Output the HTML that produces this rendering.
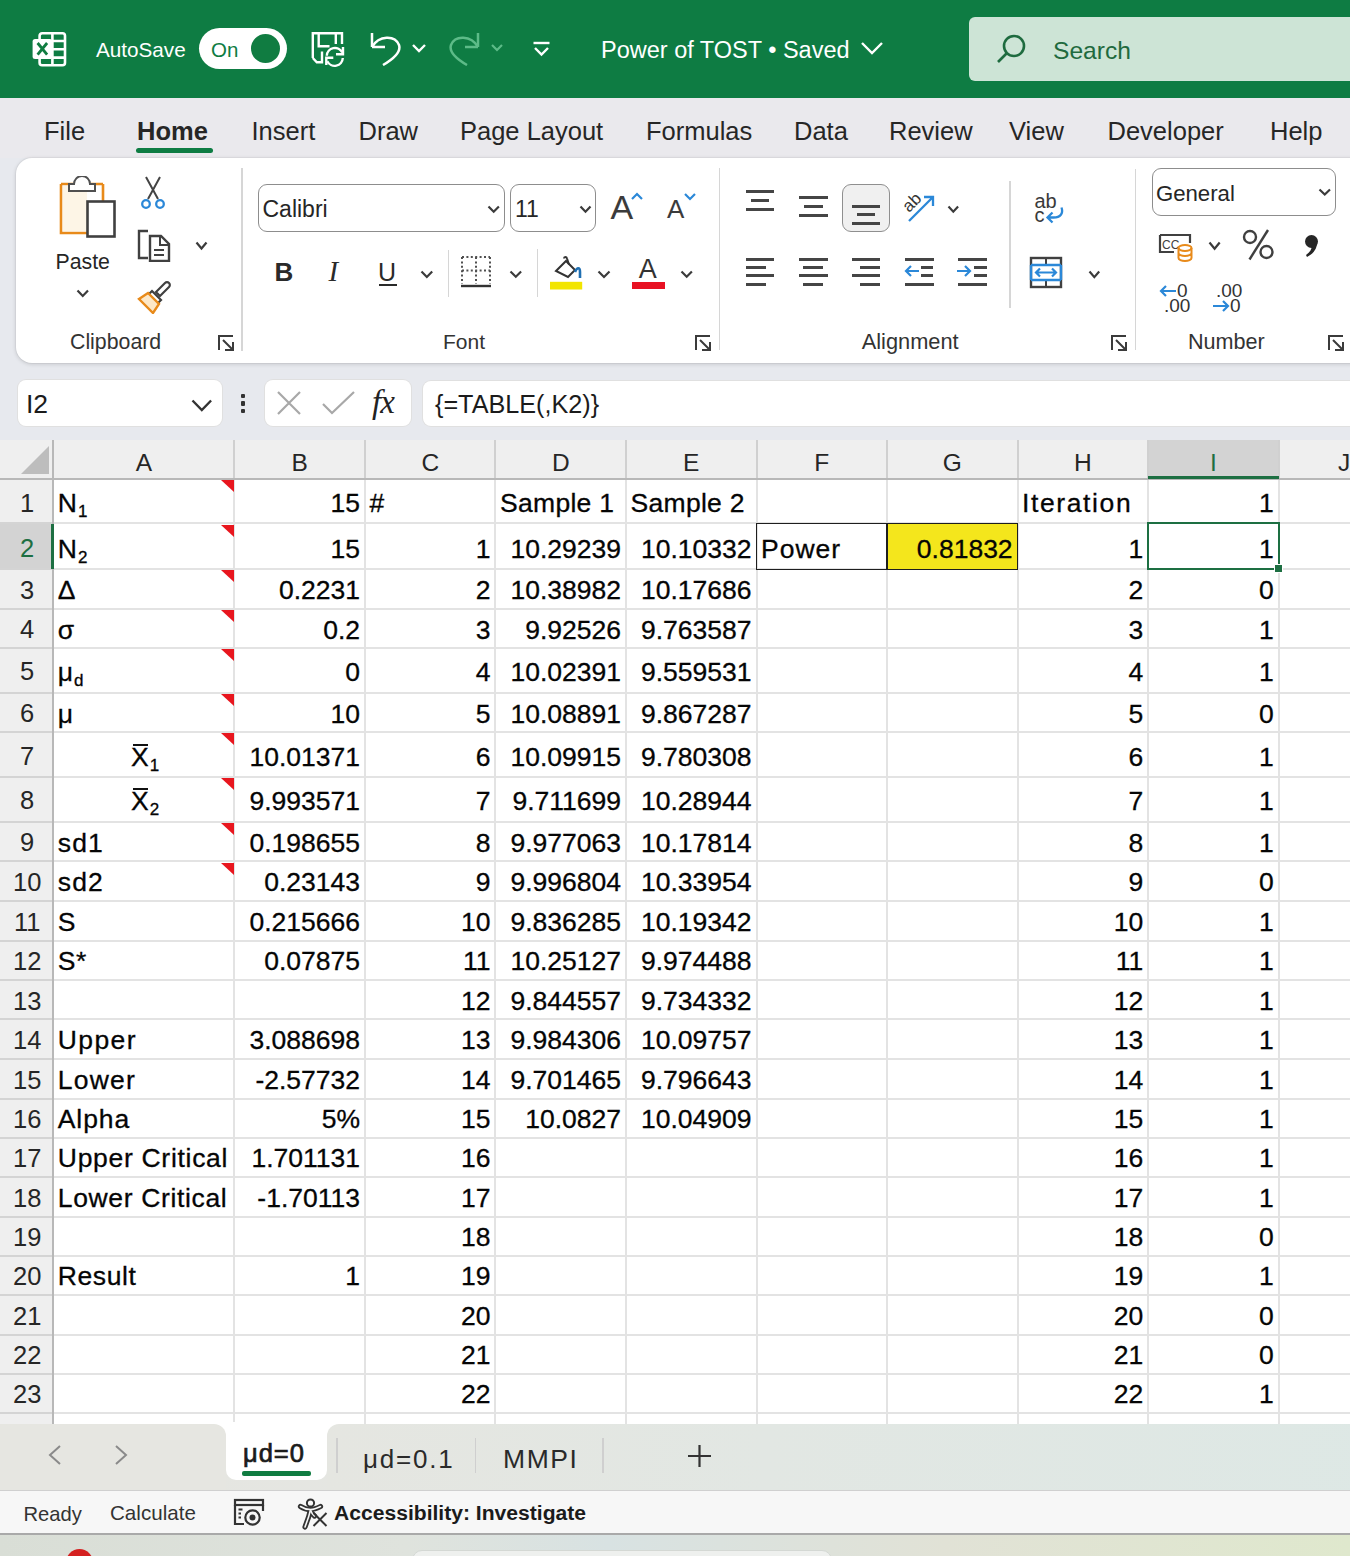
<!DOCTYPE html>
<html><head><meta charset="utf-8"><style>
html,body{margin:0;padding:0;}
body{width:1350px;height:1556px;position:relative;overflow:hidden;background:#e7e9ee;font-family:"Liberation Sans",sans-serif;}
</style></head><body>
<div style="position:absolute;left:0px;top:0px;width:1350px;height:98px;background:#0e7c43;"></div><svg style="position:absolute;left:31px;top:31px;" width="36" height="36" viewBox="0 0 36 36" fill="none">
<rect x="8.6" y="2.3" width="25.4" height="32" rx="2.5" stroke="#fff" stroke-width="2.6"/>
<path d="M21.4 2v33 M21.4 10h12.6 M21.4 18.3h12.6 M21.4 26.6h12.6 M10 10h10 M10 26.6h10" stroke="#fff" stroke-width="2.6"/>
<rect x="1.6" y="7.9" width="19.5" height="20.2" rx="2.5" fill="#fff"/>
<path d="M6.6 12l9.5 11.6 M16.1 12l-9.5 11.6" stroke="#107c41" stroke-width="2.8"/>
</svg><div style="left:96px;position:absolute;top:39.88px;font-size:20.7px;line-height:20.7px;color:#fff;font-weight:400;font-family:&quot;Liberation Sans&quot;,sans-serif;white-space:nowrap;">AutoSave</div><div style="position:absolute;left:198.5px;top:28.2px;width:88.5px;height:41px;background:#fff;border-radius:21px;"></div><div style="left:211px;position:absolute;top:39.65px;font-size:20.5px;line-height:20.5px;color:#0e7c43;font-weight:400;font-family:&quot;Liberation Sans&quot;,sans-serif;white-space:nowrap;">On</div><div style="position:absolute;left:251px;top:34px;width:29px;height:29px;border-radius:50%;background:#107c41;"></div><svg style="position:absolute;left:311px;top:31px;" width="36" height="36" viewBox="0 0 36 36" fill="none">
<path d="M1.8 27V2.2H31V13 M1.8 27l4 4.3H11V20.5" stroke="#fff" stroke-width="2.4"/>
<path d="M7.7 2.2V15.3H18.5 M24.8 2.2V13" stroke="#fff" stroke-width="2.4"/>
<path d="M15.8 24.8a8.2 8.2 0 0 1 15.5-3.3 M31.8 27a8.2 8.2 0 0 1-15.5 3.3" stroke="#fff" stroke-width="2.4"/>
<path d="M32 16v7.2h-7 M15.3 34v-7.2h7" stroke="#fff" stroke-width="2.4"/>
</svg><svg style="position:absolute;left:369px;top:31px;" width="34" height="35" viewBox="0 0 34 35" fill="none">
<path d="M3 16 L 3 2 M3 16 L 16 16" stroke="#fff" stroke-width="2.5"/>
<path d="M3 16 C 10 4, 26 4, 30 14 C 32 20, 26 27, 14 34" stroke="#fff" stroke-width="2.5"/>
</svg><svg style="position:absolute;left:411px;top:43px;" width="16" height="11" viewBox="0 0 16 11" fill="none"><path d="M2 2l6 6 6-6" stroke="#fff" stroke-width="2.4"/></svg><svg style="position:absolute;left:447px;top:31px;" width="34" height="35" viewBox="0 0 34 35" fill="none">
<path d="M31 2 L 31 16 M31 16 L 18 16" stroke="#5dbb88" stroke-width="2.5"/>
<path d="M31 16 C 24 4, 8 4, 4 14 C 2 20, 8 27, 20 34" stroke="#5dbb88" stroke-width="2.5"/>
</svg><svg style="position:absolute;left:490px;top:43px;" width="14" height="11" viewBox="0 0 14 11" fill="none"><path d="M2 2l5 5 5-5" stroke="#5dbb88" stroke-width="2.2"/></svg><svg style="position:absolute;left:532px;top:41px;" width="19" height="16" viewBox="0 0 19 16" fill="none"><path d="M1.5 2h16" stroke="#fff" stroke-width="2.4"/><path d="M3 7l6.5 6.5 6.5-6.5" stroke="#fff" stroke-width="2.4"/></svg><div style="left:601px;position:absolute;top:38.61px;font-size:23.5px;line-height:23.5px;color:#fff;font-weight:400;font-family:&quot;Liberation Sans&quot;,sans-serif;white-space:nowrap;">Power of TOST • Saved</div><svg style="position:absolute;left:860px;top:40px;" width="24" height="16" viewBox="0 0 24 16" fill="none"><path d="M2 3l10 10 10-10" stroke="#fff" stroke-width="2.4"/></svg><div style="position:absolute;left:969px;top:17px;width:400px;height:64px;background:#cde4d6;border-radius:6px;"></div><svg style="position:absolute;left:996px;top:33px;" width="32" height="32" viewBox="0 0 32 32" fill="none"><circle cx="18" cy="13" r="10" stroke="#1e6b3f" stroke-width="2.6"/><path d="M11 20L2 29" stroke="#1e6b3f" stroke-width="2.6"/></svg><div style="left:1053px;position:absolute;top:39.18px;font-size:24.6px;line-height:24.6px;color:#1f6a3e;font-weight:400;font-family:&quot;Liberation Sans&quot;,sans-serif;white-space:nowrap;">Search</div><div style="position:absolute;left:0px;top:98px;width:1350px;height:60px;background:#eae9ed;"></div><div style="position:absolute;left:44px;top:119.41px;width:39px;font-size:25.5px;line-height:25.5px;color:#262626;font-weight:400;white-space:nowrap;">File</div><div style="position:absolute;left:137px;top:119.41px;width:73px;font-size:25.5px;line-height:25.5px;color:#262626;font-weight:700;white-space:nowrap;">Home</div><div style="position:absolute;left:251.5px;top:119.41px;width:64.5px;font-size:25.5px;line-height:25.5px;color:#262626;font-weight:400;white-space:nowrap;">Insert</div><div style="position:absolute;left:358.5px;top:119.41px;width:60.5px;font-size:25.5px;line-height:25.5px;color:#262626;font-weight:400;white-space:nowrap;">Draw</div><div style="position:absolute;left:460px;top:119.41px;width:142.5px;font-size:25.5px;line-height:25.5px;color:#262626;font-weight:400;white-space:nowrap;">Page Layout</div><div style="position:absolute;left:646px;top:119.41px;width:108px;font-size:25.5px;line-height:25.5px;color:#262626;font-weight:400;white-space:nowrap;">Formulas</div><div style="position:absolute;left:794px;top:119.41px;width:55px;font-size:25.5px;line-height:25.5px;color:#262626;font-weight:400;white-space:nowrap;">Data</div><div style="position:absolute;left:889px;top:119.41px;width:80px;font-size:25.5px;line-height:25.5px;color:#262626;font-weight:400;white-space:nowrap;">Review</div><div style="position:absolute;left:1009px;top:119.41px;width:57px;font-size:25.5px;line-height:25.5px;color:#262626;font-weight:400;white-space:nowrap;">View</div><div style="position:absolute;left:1107.5px;top:119.41px;width:120px;font-size:25.5px;line-height:25.5px;color:#262626;font-weight:400;white-space:nowrap;">Developer</div><div style="position:absolute;left:1270px;top:119.41px;width:54px;font-size:25.5px;line-height:25.5px;color:#262626;font-weight:400;white-space:nowrap;">Help</div><div style="position:absolute;left:136px;top:148px;width:77px;height:4.5px;background:#0e7c43;border-radius:3px;"></div><div style="position:absolute;left:16px;top:158px;width:1400px;height:205px;background:#fff;border-radius:16px;box-shadow:0 1px 4px rgba(0,0,0,0.16), 0 0 0 1px rgba(0,0,0,0.03);"></div><svg style="position:absolute;left:58px;top:176px;" width="60" height="64" viewBox="0 0 60 64" fill="none">
<path d="M3 8h12 M33 8h12 M45 8v18 M3 8v49h26" stroke="#e88a1a" stroke-width="2.6"/>
<rect x="5" y="10" width="24" height="45" fill="#fdf5e6"/>
<path d="M11 15v-7h5a8 8 0 0 1 16 0h5v7z" stroke="#505050" stroke-width="2" fill="#fff"/>
<rect x="29.5" y="25.5" width="27" height="35" stroke="#404040" stroke-width="2.6" fill="#fff"/>
</svg><div style="left:55.5px;position:absolute;top:252.37px;font-size:21.3px;line-height:21.3px;color:#262626;font-weight:400;font-family:&quot;Liberation Sans&quot;,sans-serif;white-space:nowrap;">Paste</div><svg style="position:absolute;left:75.5px;top:289px;" width="13.5" height="9.5" viewBox="0 0 13.5 9.5" fill="none"><path d="M1.5 1.5L6.75 7.0L12.0 1.5" stroke="#3b3b3b" stroke-width="2.2"/></svg><svg style="position:absolute;left:140px;top:176px;" width="26" height="34" viewBox="0 0 26 34" fill="none">
<path d="M6 1l12 22 M20 1L8 23" stroke="#444" stroke-width="2"/>
<circle cx="6" cy="28" r="3.8" stroke="#2b88d8" stroke-width="2.3"/>
<circle cx="20" cy="28" r="3.8" stroke="#2b88d8" stroke-width="2.3"/>
</svg><svg style="position:absolute;left:136px;top:228px;" width="36" height="34" viewBox="0 0 36 34" fill="none">
<path d="M12 3h-9v27h9" stroke="#404040" stroke-width="2.4"/>
<path d="M14 8h11l8 8v17h-19z" stroke="#404040" stroke-width="2.4" fill="#fff"/>
<path d="M24 8v9h9 M18 22h10 M18 27h10" stroke="#404040" stroke-width="2"/>
</svg><svg style="position:absolute;left:195.3px;top:241px;" width="13" height="10" viewBox="0 0 13 10" fill="none"><path d="M1.5 1.5L6.5 7.5L11.5 1.5" stroke="#3b3b3b" stroke-width="2.2"/></svg><svg style="position:absolute;left:136px;top:280px;" width="36" height="34" viewBox="0 0 36 34" fill="none">
<path d="M20 12l9-9a2.5 2.5 0 0 1 4 4l-9 9z" stroke="#404040" stroke-width="2.2" fill="#fff"/>
<path d="M16 11l9 9-4 4-9-9z" stroke="#404040" stroke-width="2.2" fill="#fff"/>
<path d="M3 19l9-6 11 11-6 9z" stroke="#e88a1a" stroke-width="2.4" fill="#fde8c8"/>
</svg><div style="left:70px;position:absolute;top:332.47px;font-size:21.3px;line-height:21.3px;color:#333;font-weight:400;font-family:&quot;Liberation Sans&quot;,sans-serif;white-space:nowrap;">Clipboard</div><svg style="position:absolute;left:217px;top:334px;" width="18" height="17" viewBox="0 0 18 17" fill="none"><path d="M2 16V2h14" stroke="#3b3b3b" stroke-width="2"/><path d="M6 6l9.5 9.5 M16 8v8h-8" stroke="#3b3b3b" stroke-width="2"/></svg><div style="position:absolute;left:241px;top:168px;width:1.5px;height:183px;background:#d6d6d6;"></div><div style="position:absolute;left:258px;top:183.7px;width:247px;height:48.5px;border:1.6px solid #8d8d8d;border-radius:9px;box-sizing:border-box;background:#fff;"></div><div style="left:262.5px;position:absolute;top:197.93px;font-size:23.0px;line-height:23.0px;color:#262626;font-weight:400;font-family:&quot;Liberation Sans&quot;,sans-serif;white-space:nowrap;">Calibri</div><svg style="position:absolute;left:487.4px;top:204.5px;" width="13.4" height="9.2" viewBox="0 0 13.4 9.2" fill="none"><path d="M1.5 1.5L6.7 6.7L11.9 1.5" stroke="#3b3b3b" stroke-width="2.2"/></svg><div style="position:absolute;left:510.2px;top:183.7px;width:86px;height:48.1px;border:1.6px solid #8d8d8d;border-radius:9px;box-sizing:border-box;background:#fff;"></div><div style="left:515px;position:absolute;top:198.03px;font-size:23.0px;line-height:23.0px;color:#262626;font-weight:400;font-family:&quot;Liberation Sans&quot;,sans-serif;white-space:nowrap;">11</div><svg style="position:absolute;left:578.7px;top:204.5px;" width="13" height="9.2" viewBox="0 0 13 9.2" fill="none"><path d="M1.5 1.5L6.5 6.7L11.5 1.5" stroke="#3b3b3b" stroke-width="2.2"/></svg><div style="left:610.5px;position:absolute;top:189.72px;font-size:34px;line-height:34px;color:#3b3b3b;font-weight:400;font-family:&quot;Liberation Sans&quot;,sans-serif;white-space:nowrap;">A</div><svg style="position:absolute;left:630px;top:192px;" width="14" height="9" viewBox="0 0 14 9" fill="none"><path d="M2 7l5-5 5 5" stroke="#2b88d8" stroke-width="2.2"/></svg><div style="left:667px;position:absolute;top:196.49px;font-size:26px;line-height:26px;color:#3b3b3b;font-weight:400;font-family:&quot;Liberation Sans&quot;,sans-serif;white-space:nowrap;">A</div><svg style="position:absolute;left:683px;top:192px;" width="14" height="9" viewBox="0 0 14 9" fill="none"><path d="M2 2l5 5 5-5" stroke="#2b88d8" stroke-width="2.2"/></svg><div style="left:274.5px;position:absolute;top:259.39px;font-size:26px;line-height:26px;color:#2a2a2a;font-weight:700;font-family:&quot;Liberation Sans&quot;,sans-serif;white-space:nowrap;">B</div><div style="left:328.5px;position:absolute;top:257.05px;font-size:29px;line-height:29px;color:#2a2a2a;font-weight:400;font-family:&quot;Liberation Sans&quot;,sans-serif;white-space:nowrap;font-style:italic;font-family:&quot;Liberation Serif&quot;,serif;">I</div><div style="left:378px;position:absolute;top:260.24px;font-size:25px;line-height:25px;color:#2a2a2a;font-weight:400;font-family:&quot;Liberation Sans&quot;,sans-serif;white-space:nowrap;">U</div><div style="position:absolute;left:378.7px;top:283.5px;width:18.6px;height:2.3px;background:#2a2a2a;"></div><svg style="position:absolute;left:420.3px;top:270px;" width="13.7" height="9.5" viewBox="0 0 13.7 9.5" fill="none"><path d="M1.5 1.5L6.85 7.0L12.2 1.5" stroke="#3b3b3b" stroke-width="2.2"/></svg><div style="position:absolute;left:447.6px;top:250px;width:1.5px;height:47px;background:#d6d6d6;"></div><svg style="position:absolute;left:459px;top:255px;" width="34" height="34" viewBox="0 0 34 34" fill="none">
<path d="M3 2v27 M17 2v27 M31 2v27 M3 2h28 M3 15.5h28" stroke="#505050" stroke-width="2" stroke-dasharray="2 2.4"/>
<path d="M2 31h30" stroke="#333" stroke-width="2.4"/>
</svg><svg style="position:absolute;left:509px;top:270px;" width="13.6" height="9.2" viewBox="0 0 13.6 9.2" fill="none"><path d="M1.5 1.5L6.8 6.7L12.1 1.5" stroke="#3b3b3b" stroke-width="2.2"/></svg><div style="position:absolute;left:536.7px;top:249px;width:1.5px;height:48px;background:#d6d6d6;"></div><svg style="position:absolute;left:550px;top:255px;" width="34" height="36" viewBox="0 0 34 36" fill="none">
<path d="M6 16l10-10 9 9-7 7z" stroke="#333" stroke-width="2" fill="#fff" transform="rotate(0)"/>
<path d="M14 3.5c0-2 2.5-2 3 0l2 6" stroke="#333" stroke-width="2"/>
<path d="M25 17c2-5 5-5 5 0v6" stroke="#1f6fb2" stroke-width="2.6"/>
<rect x="-1.5" y="26.8" width="33.7" height="7.7" fill="#f2e500"/>
</svg><svg style="position:absolute;left:596.7px;top:269.5px;" width="14" height="9.5" viewBox="0 0 14 9.5" fill="none"><path d="M1.5 1.5L7.0 7.0L12.5 1.5" stroke="#3b3b3b" stroke-width="2.2"/></svg><div style="left:638.8px;position:absolute;top:256.14px;font-size:27px;line-height:27px;color:#333;font-weight:400;font-family:&quot;Liberation Sans&quot;,sans-serif;white-space:nowrap;">A</div><div style="position:absolute;left:632px;top:281.8px;width:33px;height:7.7px;background:#e81123;"></div><svg style="position:absolute;left:680.3px;top:270px;" width="13.4" height="9.2" viewBox="0 0 13.4 9.2" fill="none"><path d="M1.5 1.5L6.7 6.7L11.9 1.5" stroke="#3b3b3b" stroke-width="2.2"/></svg><div style="left:443px;position:absolute;top:331.42px;font-size:21px;line-height:21px;color:#333;font-weight:400;font-family:&quot;Liberation Sans&quot;,sans-serif;white-space:nowrap;">Font</div><svg style="position:absolute;left:694px;top:334px;" width="18" height="17" viewBox="0 0 18 17" fill="none"><path d="M2 16V2h14" stroke="#3b3b3b" stroke-width="2"/><path d="M6 6l9.5 9.5 M16 8v8h-8" stroke="#3b3b3b" stroke-width="2"/></svg><div style="position:absolute;left:718.7px;top:168px;width:1.5px;height:182px;background:#d6d6d6;"></div><div style="position:absolute;left:841.8px;top:183.7px;width:48px;height:48.7px;border:1.6px solid #8f8f8f;border-radius:9px;box-sizing:border-box;background:#f0f0f0;"></div><div style="position:absolute;left:746px;top:190px;width:28px;height:3px;background:#454545;"></div><div style="position:absolute;left:751px;top:199px;width:18px;height:3px;background:#454545;"></div><div style="position:absolute;left:746px;top:208px;width:28px;height:3px;background:#454545;"></div><div style="position:absolute;left:799px;top:196px;width:29px;height:3px;background:#454545;"></div><div style="position:absolute;left:804px;top:205px;width:19px;height:3px;background:#454545;"></div><div style="position:absolute;left:799px;top:214px;width:29px;height:3px;background:#454545;"></div><div style="position:absolute;left:852px;top:205px;width:28px;height:3px;background:#454545;"></div><div style="position:absolute;left:857px;top:213px;width:18px;height:3px;background:#454545;"></div><div style="position:absolute;left:852px;top:222px;width:28px;height:3px;background:#454545;"></div><svg style="position:absolute;left:900px;top:188px;" width="40" height="36" viewBox="0 0 40 36" fill="none">
<text x="0" y="0" transform="translate(9 25) rotate(-45)" font-family="Liberation Sans" font-size="17" fill="#333">ab</text>
<path d="M9 33L33 9 M24 9h9v9" stroke="#2b88d8" stroke-width="2.3"/>
</svg><svg style="position:absolute;left:947px;top:204.5px;" width="12.6" height="9.2" viewBox="0 0 12.6 9.2" fill="none"><path d="M1.5 1.5L6.3 6.7L11.1 1.5" stroke="#3b3b3b" stroke-width="2.2"/></svg><div style="position:absolute;left:746px;top:258px;width:28px;height:3px;background:#454545;"></div><div style="position:absolute;left:746px;top:266px;width:20px;height:3px;background:#454545;"></div><div style="position:absolute;left:746px;top:274px;width:28px;height:3px;background:#454545;"></div><div style="position:absolute;left:746px;top:283px;width:20px;height:3px;background:#454545;"></div><div style="position:absolute;left:799px;top:258px;width:29px;height:3px;background:#454545;"></div><div style="position:absolute;left:803px;top:266px;width:20px;height:3px;background:#454545;"></div><div style="position:absolute;left:799px;top:274px;width:29px;height:3px;background:#454545;"></div><div style="position:absolute;left:803px;top:283px;width:20px;height:3px;background:#454545;"></div><div style="position:absolute;left:852px;top:258px;width:28px;height:3px;background:#454545;"></div><div style="position:absolute;left:860px;top:266px;width:20px;height:3px;background:#454545;"></div><div style="position:absolute;left:852px;top:274px;width:28px;height:3px;background:#454545;"></div><div style="position:absolute;left:860px;top:283px;width:20px;height:3px;background:#454545;"></div><div style="position:absolute;left:905px;top:258px;width:29px;height:3px;background:#454545;"></div><div style="position:absolute;left:921px;top:266px;width:12px;height:3px;background:#454545;"></div><div style="position:absolute;left:921px;top:274px;width:12px;height:3px;background:#454545;"></div><div style="position:absolute;left:905px;top:283px;width:29px;height:3px;background:#454545;"></div><svg style="position:absolute;left:903px;top:264px;" width="18" height="14" viewBox="0 0 18 14" fill="none"><path d="M16 7H3 M8 2L3 7l5 5" stroke="#2b88d8" stroke-width="2.2"/></svg><div style="position:absolute;left:958px;top:258px;width:29px;height:3px;background:#454545;"></div><div style="position:absolute;left:974px;top:266px;width:13px;height:3px;background:#454545;"></div><div style="position:absolute;left:974px;top:274px;width:13px;height:3px;background:#454545;"></div><div style="position:absolute;left:958px;top:283px;width:29px;height:3px;background:#454545;"></div><svg style="position:absolute;left:956px;top:264px;" width="18" height="14" viewBox="0 0 18 14" fill="none"><path d="M1 7h13 M9 2l5 5-5 5" stroke="#2b88d8" stroke-width="2.2"/></svg><div style="left:861.7px;position:absolute;top:331.05px;font-size:21.8px;line-height:21.8px;color:#333;font-weight:400;font-family:&quot;Liberation Sans&quot;,sans-serif;white-space:nowrap;">Alignment</div><div style="position:absolute;left:1009.2px;top:181px;width:1.5px;height:127px;background:#d6d6d6;"></div><svg style="position:absolute;left:1033px;top:186px;" width="36" height="42" viewBox="0 0 36 42" fill="none">
<text x="1.5" y="21.5" font-family="Liberation Sans" font-size="20" fill="#3a3a3a">ab</text>
<text x="1.5" y="36" font-family="Liberation Sans" font-size="20" fill="#3a3a3a">c</text>
<path d="M28.5 21.5c2 6-1 10-8 10h-5.5 M19.5 26.5l-5 5 5 5" stroke="#2b88d8" stroke-width="2.3"/>
</svg><svg style="position:absolute;left:1029px;top:256px;" width="34" height="33" viewBox="0 0 34 33" fill="none">
<rect x="2" y="2" width="30" height="29" stroke="#404040" stroke-width="2.4" fill="#fff"/>
<path d="M2 9h30 M2 24h30 M17 2v7 M17 24v7" stroke="#404040" stroke-width="2"/>
<path d="M2 9v15 M32 9v15 M2 9h30 M2 24h30" stroke="#2b88d8" stroke-width="2.4"/>
<path d="M7 16.5h20 M11 12.5l-4 4 4 4 M23 12.5l4 4-4 4" stroke="#2b88d8" stroke-width="2.2"/>
</svg><svg style="position:absolute;left:1088.2px;top:269.7px;" width="12.7" height="9.6" viewBox="0 0 12.7 9.6" fill="none"><path d="M1.5 1.5L6.35 7.1L11.2 1.5" stroke="#3b3b3b" stroke-width="2.2"/></svg><svg style="position:absolute;left:1110px;top:334px;" width="18" height="17" viewBox="0 0 18 17" fill="none"><path d="M2 16V2h14" stroke="#3b3b3b" stroke-width="2"/><path d="M6 6l9.5 9.5 M16 8v8h-8" stroke="#3b3b3b" stroke-width="2"/></svg><div style="position:absolute;left:1134.8px;top:169px;width:1.5px;height:181px;background:#d6d6d6;"></div><div style="position:absolute;left:1151.9px;top:167.5px;width:184.2px;height:48.5px;border:1.6px solid #8d8d8d;border-radius:9px;box-sizing:border-box;background:#fff;"></div><div style="left:1155.9px;position:absolute;top:182.51px;font-size:22.2px;line-height:22.2px;color:#262626;font-weight:400;font-family:&quot;Liberation Sans&quot;,sans-serif;white-space:nowrap;">General</div><svg style="position:absolute;left:1317.5px;top:188px;" width="13.5" height="9" viewBox="0 0 13.5 9" fill="none"><path d="M1.5 1.5L6.75 6.5L12.0 1.5" stroke="#3b3b3b" stroke-width="2.2"/></svg><svg style="position:absolute;left:1158px;top:233px;" width="38" height="30" viewBox="0 0 38 30" fill="none">
<path d="M2 2h30v8 M2 2v17h14" stroke="#404040" stroke-width="2.2"/>
<text x="4" y="16" font-family="Liberation Sans" font-size="12" fill="#404040">CC</text>
<ellipse cx="27" cy="15" rx="6.5" ry="3" fill="#fff" stroke="#e88a1a" stroke-width="2"/>
<path d="M20.5 15v10 M33.5 15v10 M20.5 20a6.5 3 0 0 0 13 0 M20.5 25a6.5 3 0 0 0 13 0" stroke="#e88a1a" stroke-width="2"/>
</svg><svg style="position:absolute;left:1207.7px;top:241px;" width="13.2" height="10.3" viewBox="0 0 13.2 10.3" fill="none"><path d="M1.5 1.5L6.6 7.8L11.7 1.5" stroke="#3b3b3b" stroke-width="2.2"/></svg><svg style="position:absolute;left:1240px;top:227px;" width="36" height="36" viewBox="0 0 36 36" fill="none"><circle cx="10" cy="10" r="6" stroke="#404040" stroke-width="2.4"/><circle cx="26.5" cy="25" r="6" stroke="#404040" stroke-width="2.4"/><path d="M28 3L9.5 32.5" stroke="#404040" stroke-width="2.4"/></svg><svg style="position:absolute;left:1302px;top:233px;" width="20" height="26" viewBox="0 0 20 26" fill="none"><path d="M7 2a7 7 0 1 1 6 12c-1 4-4 8-8 10" stroke="#262626" stroke-width="0" fill="none"/><circle cx="9.5" cy="8.5" r="6.5" fill="#262626"/><path d="M15 10c0 6-4 11-10 14l-1-2c4-3 6-6 6-10z" fill="#262626"/></svg><div style="left:1177px;position:absolute;top:281.42px;font-size:19px;line-height:19px;color:#333;font-weight:400;font-family:&quot;Liberation Sans&quot;,sans-serif;white-space:nowrap;">0</div><div style="left:1164px;position:absolute;top:296.42px;font-size:19px;line-height:19px;color:#333;font-weight:400;font-family:&quot;Liberation Sans&quot;,sans-serif;white-space:nowrap;">.00</div><svg style="position:absolute;left:1158px;top:283px;" width="20" height="16" viewBox="0 0 20 16" fill="none"><path d="M18 8H3 M8 3L3 8l5 5" stroke="#2b88d8" stroke-width="2.2"/></svg><div style="left:1216px;position:absolute;top:281.42px;font-size:19px;line-height:19px;color:#333;font-weight:400;font-family:&quot;Liberation Sans&quot;,sans-serif;white-space:nowrap;">.00</div><div style="left:1230px;position:absolute;top:296.42px;font-size:19px;line-height:19px;color:#333;font-weight:400;font-family:&quot;Liberation Sans&quot;,sans-serif;white-space:nowrap;">0</div><svg style="position:absolute;left:1211px;top:298px;" width="22" height="16" viewBox="0 0 22 16" fill="none"><path d="M2 8h15 M12 3l5 5-5 5" stroke="#2b88d8" stroke-width="2.2"/></svg><div style="left:1188px;position:absolute;top:330.52px;font-size:21.6px;line-height:21.6px;color:#333;font-weight:400;font-family:&quot;Liberation Sans&quot;,sans-serif;white-space:nowrap;">Number</div><svg style="position:absolute;left:1327px;top:334px;" width="18" height="17" viewBox="0 0 18 17" fill="none"><path d="M2 16V2h14" stroke="#3b3b3b" stroke-width="2"/><path d="M6 6l9.5 9.5 M16 8v8h-8" stroke="#3b3b3b" stroke-width="2"/></svg><div style="position:absolute;left:17.9px;top:380.4px;width:203.7px;height:45.6px;background:#fff;border-radius:8px;box-shadow:0 0 0 1px #e0e0e0;"></div><div style="left:26px;position:absolute;top:391.47px;font-size:26.5px;line-height:26.5px;color:#1b1b1b;font-weight:400;font-family:&quot;Liberation Sans&quot;,sans-serif;white-space:nowrap;">I2</div><svg style="position:absolute;left:191.3px;top:398.5px;" width="21.6" height="13.5" viewBox="0 0 21.6 13.5" fill="none"><path d="M1.5 1.5L10.8 11.0L20.1 1.5" stroke="#333" stroke-width="2.4"/></svg><div style="position:absolute;left:240.5px;top:393.7px;width:4.6px;height:4.6px;background:#333;border-radius:1px;"></div><div style="position:absolute;left:240.5px;top:401.2px;width:4.6px;height:4.6px;background:#333;border-radius:1px;"></div><div style="position:absolute;left:240.5px;top:408.7px;width:4.6px;height:4.6px;background:#333;border-radius:1px;"></div><div style="position:absolute;left:265px;top:380.4px;width:146.3px;height:45.6px;background:#fff;border-radius:8px;box-shadow:0 0 0 1px #e0e0e0;"></div><svg style="position:absolute;left:275px;top:389px;" width="28" height="28" viewBox="0 0 28 28" fill="none"><path d="M3 3l22 22 M25 3L3 25" stroke="#a8a8a8" stroke-width="2.2"/></svg><svg style="position:absolute;left:321px;top:389px;" width="36" height="28" viewBox="0 0 36 28" fill="none"><path d="M2 15l9 9L33 3" stroke="#a8a8a8" stroke-width="2.2"/></svg><div style="position:absolute;left:372px;top:382px;font-family:'Liberation Serif',serif;font-style:italic;font-size:33px;line-height:40px;color:#222;letter-spacing:-1px;">fx</div><div style="position:absolute;left:423px;top:380.5px;width:1000px;height:45.7px;background:#fff;border-radius:8px;box-shadow:0 0 0 1px #e0e0e0;"></div><div style="left:435px;position:absolute;top:391.97px;font-size:25.2px;line-height:25.2px;color:#1b1b1b;font-weight:400;font-family:&quot;Liberation Sans&quot;,sans-serif;white-space:nowrap;">{=TABLE(,K2)}</div><div style="position:absolute;left:53.3px;top:479.0px;width:1296.7px;height:945.0px;background:#fff;"></div><div style="position:absolute;left:0px;top:440.4px;width:1350px;height:38.60000000000002px;background:#efefef;"></div><div style="position:absolute;left:0px;top:479.0px;width:53.3px;height:945.0px;background:#efefef;"></div><div style="position:absolute;left:0px;top:523.5px;width:53.3px;height:45.5px;background:#d3d3d3;"></div><div style="position:absolute;left:1148.2px;top:440.4px;width:130.5px;height:38.60000000000002px;background:#d3d3d3;"></div><svg style="position:absolute;left:20px;top:445px;" width="30" height="30" viewBox="0 0 30 30" fill="none"><path d="M29 1V29H1z" fill="#bdbdbd"/></svg><div style="position:absolute;left:53.3px;top:522px;width:1296.7px;height:2px;background:#e3e3e3;"></div><div style="position:absolute;left:53.3px;top:568px;width:1296.7px;height:2px;background:#e3e3e3;"></div><div style="position:absolute;left:53.3px;top:608px;width:1296.7px;height:2px;background:#e3e3e3;"></div><div style="position:absolute;left:53.3px;top:647px;width:1296.7px;height:2px;background:#e3e3e3;"></div><div style="position:absolute;left:53.3px;top:692px;width:1296.7px;height:2px;background:#e3e3e3;"></div><div style="position:absolute;left:53.3px;top:731px;width:1296.7px;height:2px;background:#e3e3e3;"></div><div style="position:absolute;left:53.3px;top:776px;width:1296.7px;height:2px;background:#e3e3e3;"></div><div style="position:absolute;left:53.3px;top:821px;width:1296.7px;height:2px;background:#e3e3e3;"></div><div style="position:absolute;left:53.3px;top:860px;width:1296.7px;height:2px;background:#e3e3e3;"></div><div style="position:absolute;left:53.3px;top:900px;width:1296.7px;height:2px;background:#e3e3e3;"></div><div style="position:absolute;left:53.3px;top:940px;width:1296.7px;height:2px;background:#e3e3e3;"></div><div style="position:absolute;left:53.3px;top:979px;width:1296.7px;height:2px;background:#e3e3e3;"></div><div style="position:absolute;left:53.3px;top:1018px;width:1296.7px;height:2px;background:#e3e3e3;"></div><div style="position:absolute;left:53.3px;top:1058px;width:1296.7px;height:2px;background:#e3e3e3;"></div><div style="position:absolute;left:53.3px;top:1098px;width:1296.7px;height:2px;background:#e3e3e3;"></div><div style="position:absolute;left:53.3px;top:1137px;width:1296.7px;height:2px;background:#e3e3e3;"></div><div style="position:absolute;left:53.3px;top:1176px;width:1296.7px;height:2px;background:#e3e3e3;"></div><div style="position:absolute;left:53.3px;top:1216px;width:1296.7px;height:2px;background:#e3e3e3;"></div><div style="position:absolute;left:53.3px;top:1255px;width:1296.7px;height:2px;background:#e3e3e3;"></div><div style="position:absolute;left:53.3px;top:1294px;width:1296.7px;height:2px;background:#e3e3e3;"></div><div style="position:absolute;left:53.3px;top:1334px;width:1296.7px;height:2px;background:#e3e3e3;"></div><div style="position:absolute;left:53.3px;top:1373px;width:1296.7px;height:2px;background:#e3e3e3;"></div><div style="position:absolute;left:53.3px;top:1412px;width:1296.7px;height:2px;background:#e3e3e3;"></div><div style="position:absolute;left:0px;top:522px;width:53.3px;height:2px;background:#d4d4d4;"></div><div style="position:absolute;left:0px;top:568px;width:53.3px;height:2px;background:#d4d4d4;"></div><div style="position:absolute;left:0px;top:608px;width:53.3px;height:2px;background:#d4d4d4;"></div><div style="position:absolute;left:0px;top:647px;width:53.3px;height:2px;background:#d4d4d4;"></div><div style="position:absolute;left:0px;top:692px;width:53.3px;height:2px;background:#d4d4d4;"></div><div style="position:absolute;left:0px;top:731px;width:53.3px;height:2px;background:#d4d4d4;"></div><div style="position:absolute;left:0px;top:776px;width:53.3px;height:2px;background:#d4d4d4;"></div><div style="position:absolute;left:0px;top:821px;width:53.3px;height:2px;background:#d4d4d4;"></div><div style="position:absolute;left:0px;top:860px;width:53.3px;height:2px;background:#d4d4d4;"></div><div style="position:absolute;left:0px;top:900px;width:53.3px;height:2px;background:#d4d4d4;"></div><div style="position:absolute;left:0px;top:940px;width:53.3px;height:2px;background:#d4d4d4;"></div><div style="position:absolute;left:0px;top:979px;width:53.3px;height:2px;background:#d4d4d4;"></div><div style="position:absolute;left:0px;top:1018px;width:53.3px;height:2px;background:#d4d4d4;"></div><div style="position:absolute;left:0px;top:1058px;width:53.3px;height:2px;background:#d4d4d4;"></div><div style="position:absolute;left:0px;top:1098px;width:53.3px;height:2px;background:#d4d4d4;"></div><div style="position:absolute;left:0px;top:1137px;width:53.3px;height:2px;background:#d4d4d4;"></div><div style="position:absolute;left:0px;top:1176px;width:53.3px;height:2px;background:#d4d4d4;"></div><div style="position:absolute;left:0px;top:1216px;width:53.3px;height:2px;background:#d4d4d4;"></div><div style="position:absolute;left:0px;top:1255px;width:53.3px;height:2px;background:#d4d4d4;"></div><div style="position:absolute;left:0px;top:1294px;width:53.3px;height:2px;background:#d4d4d4;"></div><div style="position:absolute;left:0px;top:1334px;width:53.3px;height:2px;background:#d4d4d4;"></div><div style="position:absolute;left:0px;top:1373px;width:53.3px;height:2px;background:#d4d4d4;"></div><div style="position:absolute;left:0px;top:1412px;width:53.3px;height:2px;background:#d4d4d4;"></div><div style="position:absolute;left:233px;top:479.0px;width:2px;height:945.0px;background:#e3e3e3;"></div><div style="position:absolute;left:364px;top:479.0px;width:2px;height:945.0px;background:#e3e3e3;"></div><div style="position:absolute;left:494px;top:479.0px;width:2px;height:945.0px;background:#e3e3e3;"></div><div style="position:absolute;left:625px;top:479.0px;width:2px;height:945.0px;background:#e3e3e3;"></div><div style="position:absolute;left:756px;top:479.0px;width:2px;height:945.0px;background:#e3e3e3;"></div><div style="position:absolute;left:886px;top:479.0px;width:2px;height:945.0px;background:#e3e3e3;"></div><div style="position:absolute;left:1017px;top:479.0px;width:2px;height:945.0px;background:#e3e3e3;"></div><div style="position:absolute;left:1147px;top:479.0px;width:2px;height:945.0px;background:#e3e3e3;"></div><div style="position:absolute;left:1278px;top:479.0px;width:2px;height:945.0px;background:#e3e3e3;"></div><div style="position:absolute;left:1408px;top:479.0px;width:2px;height:945.0px;background:#e3e3e3;"></div><div style="position:absolute;left:233px;top:440.4px;width:2px;height:38.60000000000002px;background:#d0d0d0;"></div><div style="position:absolute;left:364px;top:440.4px;width:2px;height:38.60000000000002px;background:#d0d0d0;"></div><div style="position:absolute;left:494px;top:440.4px;width:2px;height:38.60000000000002px;background:#d0d0d0;"></div><div style="position:absolute;left:625px;top:440.4px;width:2px;height:38.60000000000002px;background:#d0d0d0;"></div><div style="position:absolute;left:756px;top:440.4px;width:2px;height:38.60000000000002px;background:#d0d0d0;"></div><div style="position:absolute;left:886px;top:440.4px;width:2px;height:38.60000000000002px;background:#d0d0d0;"></div><div style="position:absolute;left:1017px;top:440.4px;width:2px;height:38.60000000000002px;background:#d0d0d0;"></div><div style="position:absolute;left:1147px;top:440.4px;width:2px;height:38.60000000000002px;background:#d0d0d0;"></div><div style="position:absolute;left:1278px;top:440.4px;width:2px;height:38.60000000000002px;background:#d0d0d0;"></div><div style="position:absolute;left:1408px;top:440.4px;width:2px;height:38.60000000000002px;background:#d0d0d0;"></div><div style="position:absolute;left:0px;top:477.8px;width:1350px;height:2px;background:#b8b8b8;"></div><div style="position:absolute;left:52.3px;top:440.4px;width:2px;height:983.6px;background:#b8b8b8;"></div><div style="position:absolute;left:1148.2px;top:476.0px;width:130.5px;height:3px;background:#1d6f42;"></div><div style="position:absolute;left:50.8px;top:523.5px;width:3px;height:45.5px;background:#1d6f42;"></div><div style="left:-256.15px;width:800px;text-align:center;position:absolute;top:450.76px;font-size:24.5px;line-height:24.5px;color:#262626;font-weight:400;font-family:&quot;Liberation Sans&quot;,sans-serif;white-space:nowrap;">A</div><div style="left:-100.30px;width:800px;text-align:center;position:absolute;top:450.76px;font-size:24.5px;line-height:24.5px;color:#262626;font-weight:400;font-family:&quot;Liberation Sans&quot;,sans-serif;white-space:nowrap;">B</div><div style="left:30.25px;width:800px;text-align:center;position:absolute;top:450.76px;font-size:24.5px;line-height:24.5px;color:#262626;font-weight:400;font-family:&quot;Liberation Sans&quot;,sans-serif;white-space:nowrap;">C</div><div style="left:160.75px;width:800px;text-align:center;position:absolute;top:450.76px;font-size:24.5px;line-height:24.5px;color:#262626;font-weight:400;font-family:&quot;Liberation Sans&quot;,sans-serif;white-space:nowrap;">D</div><div style="left:291.25px;width:800px;text-align:center;position:absolute;top:450.76px;font-size:24.5px;line-height:24.5px;color:#262626;font-weight:400;font-family:&quot;Liberation Sans&quot;,sans-serif;white-space:nowrap;">E</div><div style="left:421.75px;width:800px;text-align:center;position:absolute;top:450.76px;font-size:24.5px;line-height:24.5px;color:#262626;font-weight:400;font-family:&quot;Liberation Sans&quot;,sans-serif;white-space:nowrap;">F</div><div style="left:552.30px;width:800px;text-align:center;position:absolute;top:450.76px;font-size:24.5px;line-height:24.5px;color:#262626;font-weight:400;font-family:&quot;Liberation Sans&quot;,sans-serif;white-space:nowrap;">G</div><div style="left:682.90px;width:800px;text-align:center;position:absolute;top:450.76px;font-size:24.5px;line-height:24.5px;color:#262626;font-weight:400;font-family:&quot;Liberation Sans&quot;,sans-serif;white-space:nowrap;">H</div><div style="left:813.45px;width:800px;text-align:center;position:absolute;top:450.76px;font-size:24.5px;line-height:24.5px;color:#1d6f42;font-weight:400;font-family:&quot;Liberation Sans&quot;,sans-serif;white-space:nowrap;">I</div><div style="left:944.00px;width:800px;text-align:center;position:absolute;top:450.76px;font-size:24.5px;line-height:24.5px;color:#262626;font-weight:400;font-family:&quot;Liberation Sans&quot;,sans-serif;white-space:nowrap;">J</div><div style="left:-372.80px;width:800px;text-align:center;position:absolute;top:491.31px;font-size:25.5px;line-height:25.5px;color:#262626;font-weight:400;font-family:&quot;Liberation Sans&quot;,sans-serif;white-space:nowrap;">1</div><div style="left:-372.80px;width:800px;text-align:center;position:absolute;top:536.41px;font-size:25.5px;line-height:25.5px;color:#1d6f42;font-weight:400;font-family:&quot;Liberation Sans&quot;,sans-serif;white-space:nowrap;">2</div><div style="left:-372.80px;width:800px;text-align:center;position:absolute;top:578.11px;font-size:25.5px;line-height:25.5px;color:#262626;font-weight:400;font-family:&quot;Liberation Sans&quot;,sans-serif;white-space:nowrap;">3</div><div style="left:-372.80px;width:800px;text-align:center;position:absolute;top:617.41px;font-size:25.5px;line-height:25.5px;color:#262626;font-weight:400;font-family:&quot;Liberation Sans&quot;,sans-serif;white-space:nowrap;">4</div><div style="left:-372.80px;width:800px;text-align:center;position:absolute;top:659.41px;font-size:25.5px;line-height:25.5px;color:#262626;font-weight:400;font-family:&quot;Liberation Sans&quot;,sans-serif;white-space:nowrap;">5</div><div style="left:-372.80px;width:800px;text-align:center;position:absolute;top:701.41px;font-size:25.5px;line-height:25.5px;color:#262626;font-weight:400;font-family:&quot;Liberation Sans&quot;,sans-serif;white-space:nowrap;">6</div><div style="left:-372.80px;width:800px;text-align:center;position:absolute;top:744.41px;font-size:25.5px;line-height:25.5px;color:#262626;font-weight:400;font-family:&quot;Liberation Sans&quot;,sans-serif;white-space:nowrap;">7</div><div style="left:-372.80px;width:800px;text-align:center;position:absolute;top:788.41px;font-size:25.5px;line-height:25.5px;color:#262626;font-weight:400;font-family:&quot;Liberation Sans&quot;,sans-serif;white-space:nowrap;">8</div><div style="left:-372.80px;width:800px;text-align:center;position:absolute;top:830.41px;font-size:25.5px;line-height:25.5px;color:#262626;font-weight:400;font-family:&quot;Liberation Sans&quot;,sans-serif;white-space:nowrap;">9</div><div style="left:-372.80px;width:800px;text-align:center;position:absolute;top:870.01px;font-size:25.5px;line-height:25.5px;color:#262626;font-weight:400;font-family:&quot;Liberation Sans&quot;,sans-serif;white-space:nowrap;">10</div><div style="left:-372.80px;width:800px;text-align:center;position:absolute;top:909.51px;font-size:25.5px;line-height:25.5px;color:#262626;font-weight:400;font-family:&quot;Liberation Sans&quot;,sans-serif;white-space:nowrap;">11</div><div style="left:-372.80px;width:800px;text-align:center;position:absolute;top:949.01px;font-size:25.5px;line-height:25.5px;color:#262626;font-weight:400;font-family:&quot;Liberation Sans&quot;,sans-serif;white-space:nowrap;">12</div><div style="left:-372.80px;width:800px;text-align:center;position:absolute;top:988.51px;font-size:25.5px;line-height:25.5px;color:#262626;font-weight:400;font-family:&quot;Liberation Sans&quot;,sans-serif;white-space:nowrap;">13</div><div style="left:-372.80px;width:800px;text-align:center;position:absolute;top:1028.01px;font-size:25.5px;line-height:25.5px;color:#262626;font-weight:400;font-family:&quot;Liberation Sans&quot;,sans-serif;white-space:nowrap;">14</div><div style="left:-372.80px;width:800px;text-align:center;position:absolute;top:1067.51px;font-size:25.5px;line-height:25.5px;color:#262626;font-weight:400;font-family:&quot;Liberation Sans&quot;,sans-serif;white-space:nowrap;">15</div><div style="left:-372.80px;width:800px;text-align:center;position:absolute;top:1107.01px;font-size:25.5px;line-height:25.5px;color:#262626;font-weight:400;font-family:&quot;Liberation Sans&quot;,sans-serif;white-space:nowrap;">16</div><div style="left:-372.80px;width:800px;text-align:center;position:absolute;top:1146.01px;font-size:25.5px;line-height:25.5px;color:#262626;font-weight:400;font-family:&quot;Liberation Sans&quot;,sans-serif;white-space:nowrap;">17</div><div style="left:-372.80px;width:800px;text-align:center;position:absolute;top:1185.51px;font-size:25.5px;line-height:25.5px;color:#262626;font-weight:400;font-family:&quot;Liberation Sans&quot;,sans-serif;white-space:nowrap;">18</div><div style="left:-372.80px;width:800px;text-align:center;position:absolute;top:1225.01px;font-size:25.5px;line-height:25.5px;color:#262626;font-weight:400;font-family:&quot;Liberation Sans&quot;,sans-serif;white-space:nowrap;">19</div><div style="left:-372.80px;width:800px;text-align:center;position:absolute;top:1264.21px;font-size:25.5px;line-height:25.5px;color:#262626;font-weight:400;font-family:&quot;Liberation Sans&quot;,sans-serif;white-space:nowrap;">20</div><div style="left:-372.80px;width:800px;text-align:center;position:absolute;top:1303.71px;font-size:25.5px;line-height:25.5px;color:#262626;font-weight:400;font-family:&quot;Liberation Sans&quot;,sans-serif;white-space:nowrap;">21</div><div style="left:-372.80px;width:800px;text-align:center;position:absolute;top:1343.21px;font-size:25.5px;line-height:25.5px;color:#262626;font-weight:400;font-family:&quot;Liberation Sans&quot;,sans-serif;white-space:nowrap;">22</div><div style="left:-372.80px;width:800px;text-align:center;position:absolute;top:1382.31px;font-size:25.5px;line-height:25.5px;color:#262626;font-weight:400;font-family:&quot;Liberation Sans&quot;,sans-serif;white-space:nowrap;">23</div><div style="left:57.8px;position:absolute;top:490.47px;font-size:26.5px;line-height:26.5px;color:#050505;font-weight:400;font-family:&quot;Liberation Sans&quot;,sans-serif;white-space:nowrap;-webkit-text-stroke:0.3px #050505;letter-spacing:0px;">N<span style="font-size:17px;position:relative;top:5px;margin-left:1px;">1</span></div><div style="left:57.8px;position:absolute;top:535.57px;font-size:26.5px;line-height:26.5px;color:#050505;font-weight:400;font-family:&quot;Liberation Sans&quot;,sans-serif;white-space:nowrap;-webkit-text-stroke:0.3px #050505;letter-spacing:0px;">N<span style="font-size:17px;position:relative;top:5px;margin-left:1px;">2</span></div><div style="left:57.8px;position:absolute;top:577.27px;font-size:26.5px;line-height:26.5px;color:#050505;font-weight:400;font-family:&quot;Liberation Sans&quot;,sans-serif;white-space:nowrap;-webkit-text-stroke:0.3px #050505;letter-spacing:0px;">Δ</div><div style="left:57.8px;position:absolute;top:616.57px;font-size:26.5px;line-height:26.5px;color:#050505;font-weight:400;font-family:&quot;Liberation Sans&quot;,sans-serif;white-space:nowrap;-webkit-text-stroke:0.3px #050505;letter-spacing:0px;">σ</div><div style="left:57.8px;position:absolute;top:658.57px;font-size:26.5px;line-height:26.5px;color:#050505;font-weight:400;font-family:&quot;Liberation Sans&quot;,sans-serif;white-space:nowrap;-webkit-text-stroke:0.3px #050505;letter-spacing:0px;">μ<span style="font-size:17px;position:relative;top:5px;margin-left:1px;">d</span></div><div style="left:57.8px;position:absolute;top:700.57px;font-size:26.5px;line-height:26.5px;color:#050505;font-weight:400;font-family:&quot;Liberation Sans&quot;,sans-serif;white-space:nowrap;-webkit-text-stroke:0.3px #050505;letter-spacing:0px;">μ</div><div style="left:57.8px;position:absolute;top:829.57px;font-size:26.5px;line-height:26.5px;color:#050505;font-weight:400;font-family:&quot;Liberation Sans&quot;,sans-serif;white-space:nowrap;-webkit-text-stroke:0.3px #050505;letter-spacing:1.1px;">sd1</div><div style="left:57.8px;position:absolute;top:869.17px;font-size:26.5px;line-height:26.5px;color:#050505;font-weight:400;font-family:&quot;Liberation Sans&quot;,sans-serif;white-space:nowrap;-webkit-text-stroke:0.3px #050505;letter-spacing:1.1px;">sd2</div><div style="left:57.8px;position:absolute;top:908.67px;font-size:26.5px;line-height:26.5px;color:#050505;font-weight:400;font-family:&quot;Liberation Sans&quot;,sans-serif;white-space:nowrap;-webkit-text-stroke:0.3px #050505;letter-spacing:0px;">S</div><div style="left:57.8px;position:absolute;top:948.17px;font-size:26.5px;line-height:26.5px;color:#050505;font-weight:400;font-family:&quot;Liberation Sans&quot;,sans-serif;white-space:nowrap;-webkit-text-stroke:0.3px #050505;letter-spacing:0.5px;">S*</div><div style="left:57.8px;position:absolute;top:1027.17px;font-size:26.5px;line-height:26.5px;color:#050505;font-weight:400;font-family:&quot;Liberation Sans&quot;,sans-serif;white-space:nowrap;-webkit-text-stroke:0.3px #050505;letter-spacing:1.4px;">Upper</div><div style="left:57.8px;position:absolute;top:1066.67px;font-size:26.5px;line-height:26.5px;color:#050505;font-weight:400;font-family:&quot;Liberation Sans&quot;,sans-serif;white-space:nowrap;-webkit-text-stroke:0.3px #050505;letter-spacing:1.2px;">Lower</div><div style="left:57.8px;position:absolute;top:1106.17px;font-size:26.5px;line-height:26.5px;color:#050505;font-weight:400;font-family:&quot;Liberation Sans&quot;,sans-serif;white-space:nowrap;-webkit-text-stroke:0.3px #050505;letter-spacing:0.9px;">Alpha</div><div style="left:57.8px;position:absolute;top:1145.17px;font-size:26.5px;line-height:26.5px;color:#050505;font-weight:400;font-family:&quot;Liberation Sans&quot;,sans-serif;white-space:nowrap;-webkit-text-stroke:0.3px #050505;letter-spacing:0.7px;">Upper Critical</div><div style="left:57.8px;position:absolute;top:1184.67px;font-size:26.5px;line-height:26.5px;color:#050505;font-weight:400;font-family:&quot;Liberation Sans&quot;,sans-serif;white-space:nowrap;-webkit-text-stroke:0.3px #050505;letter-spacing:0.65px;">Lower Critical</div><div style="left:57.8px;position:absolute;top:1263.37px;font-size:26.5px;line-height:26.5px;color:#050505;font-weight:400;font-family:&quot;Liberation Sans&quot;,sans-serif;white-space:nowrap;-webkit-text-stroke:0.3px #050505;letter-spacing:0.6px;">Result</div><div style="position:absolute;left:131px;top:743.57px;font-size:26.5px;line-height:26.5px;color:#050505;white-space:nowrap;-webkit-text-stroke:0.3px #050505;">X<span style="font-size:17px;position:relative;top:5px;margin-left:1px;">1</span></div><div style="position:absolute;left:132.5px;top:743.5px;width:15.5px;height:2px;background:#111;"></div><div style="position:absolute;left:131px;top:787.57px;font-size:26.5px;line-height:26.5px;color:#050505;white-space:nowrap;-webkit-text-stroke:0.3px #050505;">X<span style="font-size:17px;position:relative;top:5px;margin-left:1px;">2</span></div><div style="position:absolute;left:132.5px;top:787.5px;width:15.5px;height:2px;background:#111;"></div><div style="right:990.00px;position:absolute;top:490.47px;font-size:26.5px;line-height:26.5px;color:#050505;font-weight:400;font-family:&quot;Liberation Sans&quot;,sans-serif;white-space:nowrap;-webkit-text-stroke:0.3px #050505;">15</div><div style="right:990.00px;position:absolute;top:535.57px;font-size:26.5px;line-height:26.5px;color:#050505;font-weight:400;font-family:&quot;Liberation Sans&quot;,sans-serif;white-space:nowrap;-webkit-text-stroke:0.3px #050505;">15</div><div style="right:990.00px;position:absolute;top:577.27px;font-size:26.5px;line-height:26.5px;color:#050505;font-weight:400;font-family:&quot;Liberation Sans&quot;,sans-serif;white-space:nowrap;-webkit-text-stroke:0.3px #050505;">0.2231</div><div style="right:990.00px;position:absolute;top:616.57px;font-size:26.5px;line-height:26.5px;color:#050505;font-weight:400;font-family:&quot;Liberation Sans&quot;,sans-serif;white-space:nowrap;-webkit-text-stroke:0.3px #050505;">0.2</div><div style="right:990.00px;position:absolute;top:658.57px;font-size:26.5px;line-height:26.5px;color:#050505;font-weight:400;font-family:&quot;Liberation Sans&quot;,sans-serif;white-space:nowrap;-webkit-text-stroke:0.3px #050505;">0</div><div style="right:990.00px;position:absolute;top:700.57px;font-size:26.5px;line-height:26.5px;color:#050505;font-weight:400;font-family:&quot;Liberation Sans&quot;,sans-serif;white-space:nowrap;-webkit-text-stroke:0.3px #050505;">10</div><div style="right:990.00px;position:absolute;top:743.57px;font-size:26.5px;line-height:26.5px;color:#050505;font-weight:400;font-family:&quot;Liberation Sans&quot;,sans-serif;white-space:nowrap;-webkit-text-stroke:0.3px #050505;">10.01371</div><div style="right:990.00px;position:absolute;top:787.57px;font-size:26.5px;line-height:26.5px;color:#050505;font-weight:400;font-family:&quot;Liberation Sans&quot;,sans-serif;white-space:nowrap;-webkit-text-stroke:0.3px #050505;">9.993571</div><div style="right:990.00px;position:absolute;top:829.57px;font-size:26.5px;line-height:26.5px;color:#050505;font-weight:400;font-family:&quot;Liberation Sans&quot;,sans-serif;white-space:nowrap;-webkit-text-stroke:0.3px #050505;">0.198655</div><div style="right:990.00px;position:absolute;top:869.17px;font-size:26.5px;line-height:26.5px;color:#050505;font-weight:400;font-family:&quot;Liberation Sans&quot;,sans-serif;white-space:nowrap;-webkit-text-stroke:0.3px #050505;">0.23143</div><div style="right:990.00px;position:absolute;top:908.67px;font-size:26.5px;line-height:26.5px;color:#050505;font-weight:400;font-family:&quot;Liberation Sans&quot;,sans-serif;white-space:nowrap;-webkit-text-stroke:0.3px #050505;">0.215666</div><div style="right:990.00px;position:absolute;top:948.17px;font-size:26.5px;line-height:26.5px;color:#050505;font-weight:400;font-family:&quot;Liberation Sans&quot;,sans-serif;white-space:nowrap;-webkit-text-stroke:0.3px #050505;">0.07875</div><div style="right:990.00px;position:absolute;top:1027.17px;font-size:26.5px;line-height:26.5px;color:#050505;font-weight:400;font-family:&quot;Liberation Sans&quot;,sans-serif;white-space:nowrap;-webkit-text-stroke:0.3px #050505;">3.088698</div><div style="right:990.00px;position:absolute;top:1066.67px;font-size:26.5px;line-height:26.5px;color:#050505;font-weight:400;font-family:&quot;Liberation Sans&quot;,sans-serif;white-space:nowrap;-webkit-text-stroke:0.3px #050505;">-2.57732</div><div style="right:990.00px;position:absolute;top:1106.17px;font-size:26.5px;line-height:26.5px;color:#050505;font-weight:400;font-family:&quot;Liberation Sans&quot;,sans-serif;white-space:nowrap;-webkit-text-stroke:0.3px #050505;">5%</div><div style="right:990.00px;position:absolute;top:1145.17px;font-size:26.5px;line-height:26.5px;color:#050505;font-weight:400;font-family:&quot;Liberation Sans&quot;,sans-serif;white-space:nowrap;-webkit-text-stroke:0.3px #050505;">1.701131</div><div style="right:990.00px;position:absolute;top:1184.67px;font-size:26.5px;line-height:26.5px;color:#050505;font-weight:400;font-family:&quot;Liberation Sans&quot;,sans-serif;white-space:nowrap;-webkit-text-stroke:0.3px #050505;">-1.70113</div><div style="right:990.00px;position:absolute;top:1263.37px;font-size:26.5px;line-height:26.5px;color:#050505;font-weight:400;font-family:&quot;Liberation Sans&quot;,sans-serif;white-space:nowrap;-webkit-text-stroke:0.3px #050505;">1</div><div style="left:369.5px;position:absolute;top:490.47px;font-size:26.5px;line-height:26.5px;color:#050505;font-weight:400;font-family:&quot;Liberation Sans&quot;,sans-serif;white-space:nowrap;-webkit-text-stroke:0.3px #050505;letter-spacing:0px;">#</div><div style="right:859.50px;position:absolute;top:535.57px;font-size:26.5px;line-height:26.5px;color:#050505;font-weight:400;font-family:&quot;Liberation Sans&quot;,sans-serif;white-space:nowrap;-webkit-text-stroke:0.3px #050505;">1</div><div style="right:859.50px;position:absolute;top:577.27px;font-size:26.5px;line-height:26.5px;color:#050505;font-weight:400;font-family:&quot;Liberation Sans&quot;,sans-serif;white-space:nowrap;-webkit-text-stroke:0.3px #050505;">2</div><div style="right:859.50px;position:absolute;top:616.57px;font-size:26.5px;line-height:26.5px;color:#050505;font-weight:400;font-family:&quot;Liberation Sans&quot;,sans-serif;white-space:nowrap;-webkit-text-stroke:0.3px #050505;">3</div><div style="right:859.50px;position:absolute;top:658.57px;font-size:26.5px;line-height:26.5px;color:#050505;font-weight:400;font-family:&quot;Liberation Sans&quot;,sans-serif;white-space:nowrap;-webkit-text-stroke:0.3px #050505;">4</div><div style="right:859.50px;position:absolute;top:700.57px;font-size:26.5px;line-height:26.5px;color:#050505;font-weight:400;font-family:&quot;Liberation Sans&quot;,sans-serif;white-space:nowrap;-webkit-text-stroke:0.3px #050505;">5</div><div style="right:859.50px;position:absolute;top:743.57px;font-size:26.5px;line-height:26.5px;color:#050505;font-weight:400;font-family:&quot;Liberation Sans&quot;,sans-serif;white-space:nowrap;-webkit-text-stroke:0.3px #050505;">6</div><div style="right:859.50px;position:absolute;top:787.57px;font-size:26.5px;line-height:26.5px;color:#050505;font-weight:400;font-family:&quot;Liberation Sans&quot;,sans-serif;white-space:nowrap;-webkit-text-stroke:0.3px #050505;">7</div><div style="right:859.50px;position:absolute;top:829.57px;font-size:26.5px;line-height:26.5px;color:#050505;font-weight:400;font-family:&quot;Liberation Sans&quot;,sans-serif;white-space:nowrap;-webkit-text-stroke:0.3px #050505;">8</div><div style="right:859.50px;position:absolute;top:869.17px;font-size:26.5px;line-height:26.5px;color:#050505;font-weight:400;font-family:&quot;Liberation Sans&quot;,sans-serif;white-space:nowrap;-webkit-text-stroke:0.3px #050505;">9</div><div style="right:859.50px;position:absolute;top:908.67px;font-size:26.5px;line-height:26.5px;color:#050505;font-weight:400;font-family:&quot;Liberation Sans&quot;,sans-serif;white-space:nowrap;-webkit-text-stroke:0.3px #050505;">10</div><div style="right:859.50px;position:absolute;top:948.17px;font-size:26.5px;line-height:26.5px;color:#050505;font-weight:400;font-family:&quot;Liberation Sans&quot;,sans-serif;white-space:nowrap;-webkit-text-stroke:0.3px #050505;">11</div><div style="right:859.50px;position:absolute;top:987.67px;font-size:26.5px;line-height:26.5px;color:#050505;font-weight:400;font-family:&quot;Liberation Sans&quot;,sans-serif;white-space:nowrap;-webkit-text-stroke:0.3px #050505;">12</div><div style="right:859.50px;position:absolute;top:1027.17px;font-size:26.5px;line-height:26.5px;color:#050505;font-weight:400;font-family:&quot;Liberation Sans&quot;,sans-serif;white-space:nowrap;-webkit-text-stroke:0.3px #050505;">13</div><div style="right:859.50px;position:absolute;top:1066.67px;font-size:26.5px;line-height:26.5px;color:#050505;font-weight:400;font-family:&quot;Liberation Sans&quot;,sans-serif;white-space:nowrap;-webkit-text-stroke:0.3px #050505;">14</div><div style="right:859.50px;position:absolute;top:1106.17px;font-size:26.5px;line-height:26.5px;color:#050505;font-weight:400;font-family:&quot;Liberation Sans&quot;,sans-serif;white-space:nowrap;-webkit-text-stroke:0.3px #050505;">15</div><div style="right:859.50px;position:absolute;top:1145.17px;font-size:26.5px;line-height:26.5px;color:#050505;font-weight:400;font-family:&quot;Liberation Sans&quot;,sans-serif;white-space:nowrap;-webkit-text-stroke:0.3px #050505;">16</div><div style="right:859.50px;position:absolute;top:1184.67px;font-size:26.5px;line-height:26.5px;color:#050505;font-weight:400;font-family:&quot;Liberation Sans&quot;,sans-serif;white-space:nowrap;-webkit-text-stroke:0.3px #050505;">17</div><div style="right:859.50px;position:absolute;top:1224.17px;font-size:26.5px;line-height:26.5px;color:#050505;font-weight:400;font-family:&quot;Liberation Sans&quot;,sans-serif;white-space:nowrap;-webkit-text-stroke:0.3px #050505;">18</div><div style="right:859.50px;position:absolute;top:1263.37px;font-size:26.5px;line-height:26.5px;color:#050505;font-weight:400;font-family:&quot;Liberation Sans&quot;,sans-serif;white-space:nowrap;-webkit-text-stroke:0.3px #050505;">19</div><div style="right:859.50px;position:absolute;top:1302.87px;font-size:26.5px;line-height:26.5px;color:#050505;font-weight:400;font-family:&quot;Liberation Sans&quot;,sans-serif;white-space:nowrap;-webkit-text-stroke:0.3px #050505;">20</div><div style="right:859.50px;position:absolute;top:1342.37px;font-size:26.5px;line-height:26.5px;color:#050505;font-weight:400;font-family:&quot;Liberation Sans&quot;,sans-serif;white-space:nowrap;-webkit-text-stroke:0.3px #050505;">21</div><div style="right:859.50px;position:absolute;top:1381.47px;font-size:26.5px;line-height:26.5px;color:#050505;font-weight:400;font-family:&quot;Liberation Sans&quot;,sans-serif;white-space:nowrap;-webkit-text-stroke:0.3px #050505;">22</div><div style="left:500.0px;position:absolute;top:490.47px;font-size:26.5px;line-height:26.5px;color:#050505;font-weight:400;font-family:&quot;Liberation Sans&quot;,sans-serif;white-space:nowrap;-webkit-text-stroke:0.3px #050505;letter-spacing:0.3px;">Sample 1</div><div style="left:630.5px;position:absolute;top:490.47px;font-size:26.5px;line-height:26.5px;color:#050505;font-weight:400;font-family:&quot;Liberation Sans&quot;,sans-serif;white-space:nowrap;-webkit-text-stroke:0.3px #050505;letter-spacing:0.3px;">Sample 2</div><div style="right:729.00px;position:absolute;top:535.57px;font-size:26.5px;line-height:26.5px;color:#050505;font-weight:400;font-family:&quot;Liberation Sans&quot;,sans-serif;white-space:nowrap;-webkit-text-stroke:0.3px #050505;">10.29239</div><div style="right:598.50px;position:absolute;top:535.57px;font-size:26.5px;line-height:26.5px;color:#050505;font-weight:400;font-family:&quot;Liberation Sans&quot;,sans-serif;white-space:nowrap;-webkit-text-stroke:0.3px #050505;">10.10332</div><div style="right:729.00px;position:absolute;top:577.27px;font-size:26.5px;line-height:26.5px;color:#050505;font-weight:400;font-family:&quot;Liberation Sans&quot;,sans-serif;white-space:nowrap;-webkit-text-stroke:0.3px #050505;">10.38982</div><div style="right:598.50px;position:absolute;top:577.27px;font-size:26.5px;line-height:26.5px;color:#050505;font-weight:400;font-family:&quot;Liberation Sans&quot;,sans-serif;white-space:nowrap;-webkit-text-stroke:0.3px #050505;">10.17686</div><div style="right:729.00px;position:absolute;top:616.57px;font-size:26.5px;line-height:26.5px;color:#050505;font-weight:400;font-family:&quot;Liberation Sans&quot;,sans-serif;white-space:nowrap;-webkit-text-stroke:0.3px #050505;">9.92526</div><div style="right:598.50px;position:absolute;top:616.57px;font-size:26.5px;line-height:26.5px;color:#050505;font-weight:400;font-family:&quot;Liberation Sans&quot;,sans-serif;white-space:nowrap;-webkit-text-stroke:0.3px #050505;">9.763587</div><div style="right:729.00px;position:absolute;top:658.57px;font-size:26.5px;line-height:26.5px;color:#050505;font-weight:400;font-family:&quot;Liberation Sans&quot;,sans-serif;white-space:nowrap;-webkit-text-stroke:0.3px #050505;">10.02391</div><div style="right:598.50px;position:absolute;top:658.57px;font-size:26.5px;line-height:26.5px;color:#050505;font-weight:400;font-family:&quot;Liberation Sans&quot;,sans-serif;white-space:nowrap;-webkit-text-stroke:0.3px #050505;">9.559531</div><div style="right:729.00px;position:absolute;top:700.57px;font-size:26.5px;line-height:26.5px;color:#050505;font-weight:400;font-family:&quot;Liberation Sans&quot;,sans-serif;white-space:nowrap;-webkit-text-stroke:0.3px #050505;">10.08891</div><div style="right:598.50px;position:absolute;top:700.57px;font-size:26.5px;line-height:26.5px;color:#050505;font-weight:400;font-family:&quot;Liberation Sans&quot;,sans-serif;white-space:nowrap;-webkit-text-stroke:0.3px #050505;">9.867287</div><div style="right:729.00px;position:absolute;top:743.57px;font-size:26.5px;line-height:26.5px;color:#050505;font-weight:400;font-family:&quot;Liberation Sans&quot;,sans-serif;white-space:nowrap;-webkit-text-stroke:0.3px #050505;">10.09915</div><div style="right:598.50px;position:absolute;top:743.57px;font-size:26.5px;line-height:26.5px;color:#050505;font-weight:400;font-family:&quot;Liberation Sans&quot;,sans-serif;white-space:nowrap;-webkit-text-stroke:0.3px #050505;">9.780308</div><div style="right:729.00px;position:absolute;top:787.57px;font-size:26.5px;line-height:26.5px;color:#050505;font-weight:400;font-family:&quot;Liberation Sans&quot;,sans-serif;white-space:nowrap;-webkit-text-stroke:0.3px #050505;">9.711699</div><div style="right:598.50px;position:absolute;top:787.57px;font-size:26.5px;line-height:26.5px;color:#050505;font-weight:400;font-family:&quot;Liberation Sans&quot;,sans-serif;white-space:nowrap;-webkit-text-stroke:0.3px #050505;">10.28944</div><div style="right:729.00px;position:absolute;top:829.57px;font-size:26.5px;line-height:26.5px;color:#050505;font-weight:400;font-family:&quot;Liberation Sans&quot;,sans-serif;white-space:nowrap;-webkit-text-stroke:0.3px #050505;">9.977063</div><div style="right:598.50px;position:absolute;top:829.57px;font-size:26.5px;line-height:26.5px;color:#050505;font-weight:400;font-family:&quot;Liberation Sans&quot;,sans-serif;white-space:nowrap;-webkit-text-stroke:0.3px #050505;">10.17814</div><div style="right:729.00px;position:absolute;top:869.17px;font-size:26.5px;line-height:26.5px;color:#050505;font-weight:400;font-family:&quot;Liberation Sans&quot;,sans-serif;white-space:nowrap;-webkit-text-stroke:0.3px #050505;">9.996804</div><div style="right:598.50px;position:absolute;top:869.17px;font-size:26.5px;line-height:26.5px;color:#050505;font-weight:400;font-family:&quot;Liberation Sans&quot;,sans-serif;white-space:nowrap;-webkit-text-stroke:0.3px #050505;">10.33954</div><div style="right:729.00px;position:absolute;top:908.67px;font-size:26.5px;line-height:26.5px;color:#050505;font-weight:400;font-family:&quot;Liberation Sans&quot;,sans-serif;white-space:nowrap;-webkit-text-stroke:0.3px #050505;">9.836285</div><div style="right:598.50px;position:absolute;top:908.67px;font-size:26.5px;line-height:26.5px;color:#050505;font-weight:400;font-family:&quot;Liberation Sans&quot;,sans-serif;white-space:nowrap;-webkit-text-stroke:0.3px #050505;">10.19342</div><div style="right:729.00px;position:absolute;top:948.17px;font-size:26.5px;line-height:26.5px;color:#050505;font-weight:400;font-family:&quot;Liberation Sans&quot;,sans-serif;white-space:nowrap;-webkit-text-stroke:0.3px #050505;">10.25127</div><div style="right:598.50px;position:absolute;top:948.17px;font-size:26.5px;line-height:26.5px;color:#050505;font-weight:400;font-family:&quot;Liberation Sans&quot;,sans-serif;white-space:nowrap;-webkit-text-stroke:0.3px #050505;">9.974488</div><div style="right:729.00px;position:absolute;top:987.67px;font-size:26.5px;line-height:26.5px;color:#050505;font-weight:400;font-family:&quot;Liberation Sans&quot;,sans-serif;white-space:nowrap;-webkit-text-stroke:0.3px #050505;">9.844557</div><div style="right:598.50px;position:absolute;top:987.67px;font-size:26.5px;line-height:26.5px;color:#050505;font-weight:400;font-family:&quot;Liberation Sans&quot;,sans-serif;white-space:nowrap;-webkit-text-stroke:0.3px #050505;">9.734332</div><div style="right:729.00px;position:absolute;top:1027.17px;font-size:26.5px;line-height:26.5px;color:#050505;font-weight:400;font-family:&quot;Liberation Sans&quot;,sans-serif;white-space:nowrap;-webkit-text-stroke:0.3px #050505;">9.984306</div><div style="right:598.50px;position:absolute;top:1027.17px;font-size:26.5px;line-height:26.5px;color:#050505;font-weight:400;font-family:&quot;Liberation Sans&quot;,sans-serif;white-space:nowrap;-webkit-text-stroke:0.3px #050505;">10.09757</div><div style="right:729.00px;position:absolute;top:1066.67px;font-size:26.5px;line-height:26.5px;color:#050505;font-weight:400;font-family:&quot;Liberation Sans&quot;,sans-serif;white-space:nowrap;-webkit-text-stroke:0.3px #050505;">9.701465</div><div style="right:598.50px;position:absolute;top:1066.67px;font-size:26.5px;line-height:26.5px;color:#050505;font-weight:400;font-family:&quot;Liberation Sans&quot;,sans-serif;white-space:nowrap;-webkit-text-stroke:0.3px #050505;">9.796643</div><div style="right:729.00px;position:absolute;top:1106.17px;font-size:26.5px;line-height:26.5px;color:#050505;font-weight:400;font-family:&quot;Liberation Sans&quot;,sans-serif;white-space:nowrap;-webkit-text-stroke:0.3px #050505;">10.0827</div><div style="right:598.50px;position:absolute;top:1106.17px;font-size:26.5px;line-height:26.5px;color:#050505;font-weight:400;font-family:&quot;Liberation Sans&quot;,sans-serif;white-space:nowrap;-webkit-text-stroke:0.3px #050505;">10.04909</div><div style="position:absolute;left:887.0px;top:523.5px;width:130.60000000000002px;height:45.5px;background:#f4e61c;"></div><div style="position:absolute;left:756.2px;top:522.7px;width:261.70000000000005px;height:47.1px;border:1.8px solid #1e1e1e;box-sizing:border-box;"></div><div style="position:absolute;left:886.4px;top:523.5px;width:1.8px;height:45.5px;background:#1e1e1e;"></div><div style="left:761.0px;position:absolute;top:535.57px;font-size:26.5px;line-height:26.5px;color:#050505;font-weight:400;font-family:&quot;Liberation Sans&quot;,sans-serif;white-space:nowrap;-webkit-text-stroke:0.3px #050505;letter-spacing:1.0px;">Power</div><div style="right:337.40px;position:absolute;top:535.57px;font-size:26.5px;line-height:26.5px;color:#050505;font-weight:400;font-family:&quot;Liberation Sans&quot;,sans-serif;white-space:nowrap;-webkit-text-stroke:0.3px #050505;">0.81832</div><div style="left:1022.1px;position:absolute;top:490.47px;font-size:26.5px;line-height:26.5px;color:#050505;font-weight:400;font-family:&quot;Liberation Sans&quot;,sans-serif;white-space:nowrap;-webkit-text-stroke:0.3px #050505;letter-spacing:1.6px;">Iteration</div><div style="right:76.30px;position:absolute;top:490.47px;font-size:26.5px;line-height:26.5px;color:#050505;font-weight:400;font-family:&quot;Liberation Sans&quot;,sans-serif;white-space:nowrap;-webkit-text-stroke:0.3px #050505;">1</div><div style="right:206.80px;position:absolute;top:535.57px;font-size:26.5px;line-height:26.5px;color:#050505;font-weight:400;font-family:&quot;Liberation Sans&quot;,sans-serif;white-space:nowrap;-webkit-text-stroke:0.3px #050505;">1</div><div style="right:76.30px;position:absolute;top:535.57px;font-size:26.5px;line-height:26.5px;color:#050505;font-weight:400;font-family:&quot;Liberation Sans&quot;,sans-serif;white-space:nowrap;-webkit-text-stroke:0.3px #050505;">1</div><div style="right:206.80px;position:absolute;top:577.27px;font-size:26.5px;line-height:26.5px;color:#050505;font-weight:400;font-family:&quot;Liberation Sans&quot;,sans-serif;white-space:nowrap;-webkit-text-stroke:0.3px #050505;">2</div><div style="right:76.30px;position:absolute;top:577.27px;font-size:26.5px;line-height:26.5px;color:#050505;font-weight:400;font-family:&quot;Liberation Sans&quot;,sans-serif;white-space:nowrap;-webkit-text-stroke:0.3px #050505;">0</div><div style="right:206.80px;position:absolute;top:616.57px;font-size:26.5px;line-height:26.5px;color:#050505;font-weight:400;font-family:&quot;Liberation Sans&quot;,sans-serif;white-space:nowrap;-webkit-text-stroke:0.3px #050505;">3</div><div style="right:76.30px;position:absolute;top:616.57px;font-size:26.5px;line-height:26.5px;color:#050505;font-weight:400;font-family:&quot;Liberation Sans&quot;,sans-serif;white-space:nowrap;-webkit-text-stroke:0.3px #050505;">1</div><div style="right:206.80px;position:absolute;top:658.57px;font-size:26.5px;line-height:26.5px;color:#050505;font-weight:400;font-family:&quot;Liberation Sans&quot;,sans-serif;white-space:nowrap;-webkit-text-stroke:0.3px #050505;">4</div><div style="right:76.30px;position:absolute;top:658.57px;font-size:26.5px;line-height:26.5px;color:#050505;font-weight:400;font-family:&quot;Liberation Sans&quot;,sans-serif;white-space:nowrap;-webkit-text-stroke:0.3px #050505;">1</div><div style="right:206.80px;position:absolute;top:700.57px;font-size:26.5px;line-height:26.5px;color:#050505;font-weight:400;font-family:&quot;Liberation Sans&quot;,sans-serif;white-space:nowrap;-webkit-text-stroke:0.3px #050505;">5</div><div style="right:76.30px;position:absolute;top:700.57px;font-size:26.5px;line-height:26.5px;color:#050505;font-weight:400;font-family:&quot;Liberation Sans&quot;,sans-serif;white-space:nowrap;-webkit-text-stroke:0.3px #050505;">0</div><div style="right:206.80px;position:absolute;top:743.57px;font-size:26.5px;line-height:26.5px;color:#050505;font-weight:400;font-family:&quot;Liberation Sans&quot;,sans-serif;white-space:nowrap;-webkit-text-stroke:0.3px #050505;">6</div><div style="right:76.30px;position:absolute;top:743.57px;font-size:26.5px;line-height:26.5px;color:#050505;font-weight:400;font-family:&quot;Liberation Sans&quot;,sans-serif;white-space:nowrap;-webkit-text-stroke:0.3px #050505;">1</div><div style="right:206.80px;position:absolute;top:787.57px;font-size:26.5px;line-height:26.5px;color:#050505;font-weight:400;font-family:&quot;Liberation Sans&quot;,sans-serif;white-space:nowrap;-webkit-text-stroke:0.3px #050505;">7</div><div style="right:76.30px;position:absolute;top:787.57px;font-size:26.5px;line-height:26.5px;color:#050505;font-weight:400;font-family:&quot;Liberation Sans&quot;,sans-serif;white-space:nowrap;-webkit-text-stroke:0.3px #050505;">1</div><div style="right:206.80px;position:absolute;top:829.57px;font-size:26.5px;line-height:26.5px;color:#050505;font-weight:400;font-family:&quot;Liberation Sans&quot;,sans-serif;white-space:nowrap;-webkit-text-stroke:0.3px #050505;">8</div><div style="right:76.30px;position:absolute;top:829.57px;font-size:26.5px;line-height:26.5px;color:#050505;font-weight:400;font-family:&quot;Liberation Sans&quot;,sans-serif;white-space:nowrap;-webkit-text-stroke:0.3px #050505;">1</div><div style="right:206.80px;position:absolute;top:869.17px;font-size:26.5px;line-height:26.5px;color:#050505;font-weight:400;font-family:&quot;Liberation Sans&quot;,sans-serif;white-space:nowrap;-webkit-text-stroke:0.3px #050505;">9</div><div style="right:76.30px;position:absolute;top:869.17px;font-size:26.5px;line-height:26.5px;color:#050505;font-weight:400;font-family:&quot;Liberation Sans&quot;,sans-serif;white-space:nowrap;-webkit-text-stroke:0.3px #050505;">0</div><div style="right:206.80px;position:absolute;top:908.67px;font-size:26.5px;line-height:26.5px;color:#050505;font-weight:400;font-family:&quot;Liberation Sans&quot;,sans-serif;white-space:nowrap;-webkit-text-stroke:0.3px #050505;">10</div><div style="right:76.30px;position:absolute;top:908.67px;font-size:26.5px;line-height:26.5px;color:#050505;font-weight:400;font-family:&quot;Liberation Sans&quot;,sans-serif;white-space:nowrap;-webkit-text-stroke:0.3px #050505;">1</div><div style="right:206.80px;position:absolute;top:948.17px;font-size:26.5px;line-height:26.5px;color:#050505;font-weight:400;font-family:&quot;Liberation Sans&quot;,sans-serif;white-space:nowrap;-webkit-text-stroke:0.3px #050505;">11</div><div style="right:76.30px;position:absolute;top:948.17px;font-size:26.5px;line-height:26.5px;color:#050505;font-weight:400;font-family:&quot;Liberation Sans&quot;,sans-serif;white-space:nowrap;-webkit-text-stroke:0.3px #050505;">1</div><div style="right:206.80px;position:absolute;top:987.67px;font-size:26.5px;line-height:26.5px;color:#050505;font-weight:400;font-family:&quot;Liberation Sans&quot;,sans-serif;white-space:nowrap;-webkit-text-stroke:0.3px #050505;">12</div><div style="right:76.30px;position:absolute;top:987.67px;font-size:26.5px;line-height:26.5px;color:#050505;font-weight:400;font-family:&quot;Liberation Sans&quot;,sans-serif;white-space:nowrap;-webkit-text-stroke:0.3px #050505;">1</div><div style="right:206.80px;position:absolute;top:1027.17px;font-size:26.5px;line-height:26.5px;color:#050505;font-weight:400;font-family:&quot;Liberation Sans&quot;,sans-serif;white-space:nowrap;-webkit-text-stroke:0.3px #050505;">13</div><div style="right:76.30px;position:absolute;top:1027.17px;font-size:26.5px;line-height:26.5px;color:#050505;font-weight:400;font-family:&quot;Liberation Sans&quot;,sans-serif;white-space:nowrap;-webkit-text-stroke:0.3px #050505;">1</div><div style="right:206.80px;position:absolute;top:1066.67px;font-size:26.5px;line-height:26.5px;color:#050505;font-weight:400;font-family:&quot;Liberation Sans&quot;,sans-serif;white-space:nowrap;-webkit-text-stroke:0.3px #050505;">14</div><div style="right:76.30px;position:absolute;top:1066.67px;font-size:26.5px;line-height:26.5px;color:#050505;font-weight:400;font-family:&quot;Liberation Sans&quot;,sans-serif;white-space:nowrap;-webkit-text-stroke:0.3px #050505;">1</div><div style="right:206.80px;position:absolute;top:1106.17px;font-size:26.5px;line-height:26.5px;color:#050505;font-weight:400;font-family:&quot;Liberation Sans&quot;,sans-serif;white-space:nowrap;-webkit-text-stroke:0.3px #050505;">15</div><div style="right:76.30px;position:absolute;top:1106.17px;font-size:26.5px;line-height:26.5px;color:#050505;font-weight:400;font-family:&quot;Liberation Sans&quot;,sans-serif;white-space:nowrap;-webkit-text-stroke:0.3px #050505;">1</div><div style="right:206.80px;position:absolute;top:1145.17px;font-size:26.5px;line-height:26.5px;color:#050505;font-weight:400;font-family:&quot;Liberation Sans&quot;,sans-serif;white-space:nowrap;-webkit-text-stroke:0.3px #050505;">16</div><div style="right:76.30px;position:absolute;top:1145.17px;font-size:26.5px;line-height:26.5px;color:#050505;font-weight:400;font-family:&quot;Liberation Sans&quot;,sans-serif;white-space:nowrap;-webkit-text-stroke:0.3px #050505;">1</div><div style="right:206.80px;position:absolute;top:1184.67px;font-size:26.5px;line-height:26.5px;color:#050505;font-weight:400;font-family:&quot;Liberation Sans&quot;,sans-serif;white-space:nowrap;-webkit-text-stroke:0.3px #050505;">17</div><div style="right:76.30px;position:absolute;top:1184.67px;font-size:26.5px;line-height:26.5px;color:#050505;font-weight:400;font-family:&quot;Liberation Sans&quot;,sans-serif;white-space:nowrap;-webkit-text-stroke:0.3px #050505;">1</div><div style="right:206.80px;position:absolute;top:1224.17px;font-size:26.5px;line-height:26.5px;color:#050505;font-weight:400;font-family:&quot;Liberation Sans&quot;,sans-serif;white-space:nowrap;-webkit-text-stroke:0.3px #050505;">18</div><div style="right:76.30px;position:absolute;top:1224.17px;font-size:26.5px;line-height:26.5px;color:#050505;font-weight:400;font-family:&quot;Liberation Sans&quot;,sans-serif;white-space:nowrap;-webkit-text-stroke:0.3px #050505;">0</div><div style="right:206.80px;position:absolute;top:1263.37px;font-size:26.5px;line-height:26.5px;color:#050505;font-weight:400;font-family:&quot;Liberation Sans&quot;,sans-serif;white-space:nowrap;-webkit-text-stroke:0.3px #050505;">19</div><div style="right:76.30px;position:absolute;top:1263.37px;font-size:26.5px;line-height:26.5px;color:#050505;font-weight:400;font-family:&quot;Liberation Sans&quot;,sans-serif;white-space:nowrap;-webkit-text-stroke:0.3px #050505;">1</div><div style="right:206.80px;position:absolute;top:1302.87px;font-size:26.5px;line-height:26.5px;color:#050505;font-weight:400;font-family:&quot;Liberation Sans&quot;,sans-serif;white-space:nowrap;-webkit-text-stroke:0.3px #050505;">20</div><div style="right:76.30px;position:absolute;top:1302.87px;font-size:26.5px;line-height:26.5px;color:#050505;font-weight:400;font-family:&quot;Liberation Sans&quot;,sans-serif;white-space:nowrap;-webkit-text-stroke:0.3px #050505;">0</div><div style="right:206.80px;position:absolute;top:1342.37px;font-size:26.5px;line-height:26.5px;color:#050505;font-weight:400;font-family:&quot;Liberation Sans&quot;,sans-serif;white-space:nowrap;-webkit-text-stroke:0.3px #050505;">21</div><div style="right:76.30px;position:absolute;top:1342.37px;font-size:26.5px;line-height:26.5px;color:#050505;font-weight:400;font-family:&quot;Liberation Sans&quot;,sans-serif;white-space:nowrap;-webkit-text-stroke:0.3px #050505;">0</div><div style="right:206.80px;position:absolute;top:1381.47px;font-size:26.5px;line-height:26.5px;color:#050505;font-weight:400;font-family:&quot;Liberation Sans&quot;,sans-serif;white-space:nowrap;-webkit-text-stroke:0.3px #050505;">22</div><div style="right:76.30px;position:absolute;top:1381.47px;font-size:26.5px;line-height:26.5px;color:#050505;font-weight:400;font-family:&quot;Liberation Sans&quot;,sans-serif;white-space:nowrap;-webkit-text-stroke:0.3px #050505;">1</div><svg style="position:absolute;left:220.9px;top:480.0px;" width="13" height="12" viewBox="0 0 13 12" fill="none"><path d="M0 0H13V12z" fill="#e8161e"/></svg><svg style="position:absolute;left:220.9px;top:524.5px;" width="13" height="12" viewBox="0 0 13 12" fill="none"><path d="M0 0H13V12z" fill="#e8161e"/></svg><svg style="position:absolute;left:220.9px;top:570.0px;" width="13" height="12" viewBox="0 0 13 12" fill="none"><path d="M0 0H13V12z" fill="#e8161e"/></svg><svg style="position:absolute;left:220.9px;top:609.5px;" width="13" height="12" viewBox="0 0 13 12" fill="none"><path d="M0 0H13V12z" fill="#e8161e"/></svg><svg style="position:absolute;left:220.9px;top:649.0px;" width="13" height="12" viewBox="0 0 13 12" fill="none"><path d="M0 0H13V12z" fill="#e8161e"/></svg><svg style="position:absolute;left:220.9px;top:694.0px;" width="13" height="12" viewBox="0 0 13 12" fill="none"><path d="M0 0H13V12z" fill="#e8161e"/></svg><svg style="position:absolute;left:220.9px;top:733.3px;" width="13" height="12" viewBox="0 0 13 12" fill="none"><path d="M0 0H13V12z" fill="#e8161e"/></svg><svg style="position:absolute;left:220.9px;top:778.0px;" width="13" height="12" viewBox="0 0 13 12" fill="none"><path d="M0 0H13V12z" fill="#e8161e"/></svg><svg style="position:absolute;left:220.9px;top:823.0px;" width="13" height="12" viewBox="0 0 13 12" fill="none"><path d="M0 0H13V12z" fill="#e8161e"/></svg><svg style="position:absolute;left:220.9px;top:862.5px;" width="13" height="12" viewBox="0 0 13 12" fill="none"><path d="M0 0H13V12z" fill="#e8161e"/></svg><div style="position:absolute;left:1147.2px;top:522.3px;width:132.5px;height:47.9px;border:2.6px solid #1d6f42;box-sizing:border-box;"></div><div style="position:absolute;left:1273.7px;top:564.0px;width:9px;height:9px;background:#1d6f42;border:1.2px solid #fff;box-sizing:border-box;"></div><div style="position:absolute;left:0px;top:1424px;width:1350px;height:60px;background:#fff;"></div><div style="position:absolute;left:0px;top:1470px;width:1350px;height:19.5px;background:linear-gradient(90deg,#e6e6e1 0%,#e4e6e2 45%,#dde8e5 100%);"></div><div style="position:absolute;left:0;top:1424px;width:225.6px;height:65.5px;background:#e6e6e1;border-radius:0 12px 0 0;"></div><div style="position:absolute;left:327.2px;top:1424px;width:1100px;height:65.5px;background:linear-gradient(90deg,#e5e6e1 0%,#e2e7e3 40%,#dde8e5 100%);border-radius:12px 0 0 0;"></div><div style="position:absolute;left:225.6px;top:1422px;width:101.6px;height:58.40000000000009px;background:#fff;border-radius:0 0 10px 10px;"></div><svg style="position:absolute;left:46px;top:1444px;" width="18" height="22" viewBox="0 0 18 22" fill="none"><path d="M14 2L4 11l10 9" stroke="#8a8a8a" stroke-width="2"/></svg><svg style="position:absolute;left:112px;top:1444px;" width="18" height="22" viewBox="0 0 18 22" fill="none"><path d="M4 2l10 9-10 9" stroke="#8a8a8a" stroke-width="2"/></svg><div style="left:243px;position:absolute;top:1440.61px;font-size:25.5px;line-height:25.5px;color:#1b1b1b;font-weight:400;font-family:&quot;Liberation Sans&quot;,sans-serif;white-space:nowrap;letter-spacing:1px;-webkit-text-stroke:0.7px #1b1b1b;">μd=0</div><div style="position:absolute;left:242.4px;top:1471.3px;width:68.7px;height:4.4px;background:#107c41;border-radius:2px;"></div><div style="position:absolute;left:336px;top:1438px;width:1.5px;height:35px;background:#cfcfcf;"></div><div style="left:363px;position:absolute;top:1446.29px;font-size:26px;line-height:26px;color:#2a2a2a;font-weight:400;font-family:&quot;Liberation Sans&quot;,sans-serif;white-space:nowrap;letter-spacing:1.8px;">μd=0.1</div><div style="position:absolute;left:474.5px;top:1438px;width:1.5px;height:35px;background:#cfcfcf;"></div><div style="left:503px;position:absolute;top:1445.87px;font-size:26.5px;line-height:26.5px;color:#2a2a2a;font-weight:400;font-family:&quot;Liberation Sans&quot;,sans-serif;white-space:nowrap;letter-spacing:1.6px;">MMPI</div><div style="position:absolute;left:602px;top:1438px;width:1.5px;height:35px;background:#cfcfcf;"></div><svg style="position:absolute;left:687px;top:1444px;" width="26" height="24" viewBox="0 0 26 24" fill="none"><path d="M12.5 1v22 M1 12h23" stroke="#333" stroke-width="2.2"/></svg><div style="position:absolute;left:0px;top:1489.5px;width:1350px;height:45.5px;background:#f7f7f7;border-top:1.5px solid #d0d0d0;border-bottom:2px solid #a9a9a9;box-sizing:border-box;"></div><div style="left:23.5px;position:absolute;top:1503.50px;font-size:20.2px;line-height:20.2px;color:#333;font-weight:400;font-family:&quot;Liberation Sans&quot;,sans-serif;white-space:nowrap;">Ready</div><div style="left:110px;position:absolute;top:1503.16px;font-size:20.6px;line-height:20.6px;color:#333;font-weight:400;font-family:&quot;Liberation Sans&quot;,sans-serif;white-space:nowrap;">Calculate</div><svg style="position:absolute;left:233px;top:1498px;" width="34" height="30" viewBox="0 0 34 30" fill="none">
<rect x="2" y="2" width="28" height="5" stroke="#333" stroke-width="2.2" fill="#f7f7f7"/>
<path d="M2 7v19h9 M30 7v6" stroke="#333" stroke-width="2.2"/>
<path d="M5.5 11.5h4 M5.5 15.5h2.5 M5.5 19.5h2.5" stroke="#333" stroke-width="2.2"/>
<circle cx="19.5" cy="19.5" r="7.2" stroke="#333" stroke-width="2.2" fill="#f7f7f7"/><circle cx="19.5" cy="19.5" r="3" fill="#333"/>
</svg><svg style="position:absolute;left:295px;top:1497px;" width="36" height="34" viewBox="0 0 36 34" fill="none">
<circle cx="15.5" cy="6" r="3.6" stroke="#333" stroke-width="2"/>
<path d="M5.5 9.5c3 2 7 3 10 3s6-1 10-3 M15.5 12.5c-1 4-1.5 7-3 10.5l-2.5 7 M15.5 13c1 3 2.5 5 4 6" stroke="#333" stroke-width="5.2" stroke-linecap="round"/>
<path d="M5.5 9.5c3 2 7 3 10 3s6-1 10-3 M15.5 12.5c-1 4-1.5 7-3 10.5l-2.5 7 M15.5 13c1 3 2.5 5 4 6" stroke="#f7f7f7" stroke-width="1.6" stroke-linecap="round"/>
<path d="M18.5 16l13 13 M31.5 16l-13 13" stroke="#333" stroke-width="2"/>
</svg><div style="left:334px;position:absolute;top:1502.34px;font-size:21.1px;line-height:21.1px;color:#1b1b1b;font-weight:700;font-family:&quot;Liberation Sans&quot;,sans-serif;white-space:nowrap;">Accessibility: Investigate</div><div style="position:absolute;left:0;top:1535px;width:1350px;height:21px;background:linear-gradient(90deg,#d9ded6 0%,#dfe3dd 30%,#d8e2e2 45%,#e1e2d6 70%,#dfe8cd 100%);"></div><div style="position:absolute;left:66px;top:1549px;width:27px;height:27px;border-radius:50%;background:#d42020;"></div><div style="position:absolute;left:412px;top:1550px;width:418px;height:30px;border-radius:10px;background:#eef0ee;border:1px solid #d4d8d4;"></div>
</body></html>
